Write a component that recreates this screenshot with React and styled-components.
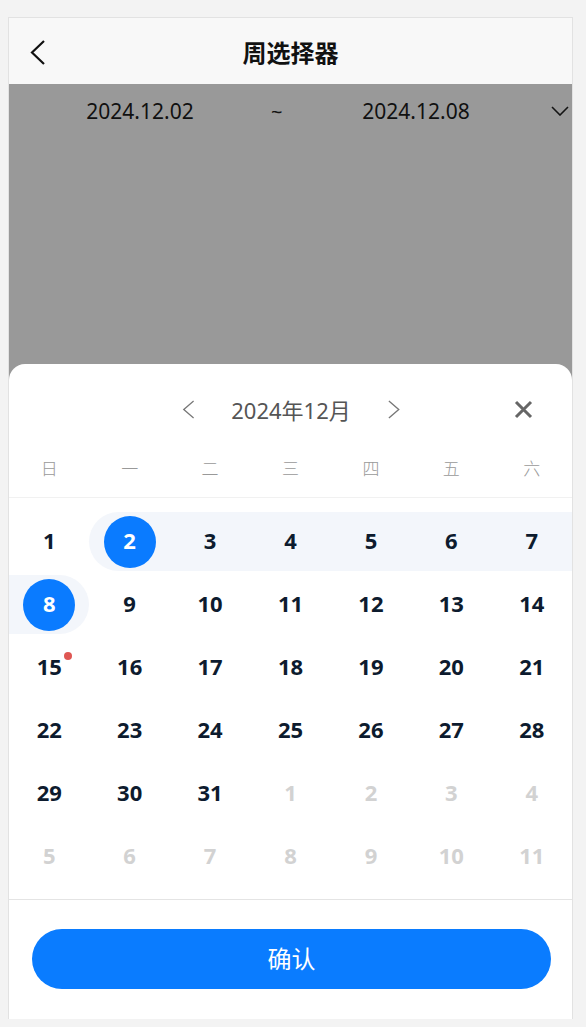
import React from "react";
import styled, { createGlobalStyle } from "styled-components";

const GlobalStyle = createGlobalStyle`
  html, body {
    margin: 0;
    background: #f3f3f3;
  }
  body {
    padding: 17px 0 0 8px;
    font-family: "Noto Sans", "Noto Sans CJK SC", sans-serif;
  }
`;

const weekNames = ["日", "一", "二", "三", "四", "五", "六"];

// December 2024, starting from Sunday 1st
const buildDays = () => {
  const days = [];
  for (let d = 1; d <= 31; d++) days.push({ day: d, muted: false });
  for (let d = 1; d <= 11; d++) days.push({ day: d, muted: true });
  return days;
};

const selectedStart = 2;
const selectedEnd = 8;

// which corners of the week band get rounded for this cell
function bandFor(item) {
  if (item.muted) return null;
  if (item.day < selectedStart || item.day > selectedEnd) return null;
  const left = item.day === selectedStart;
  const right = item.day === selectedEnd;
  if (left && right) return "single";
  if (left) return "start";
  if (right) return "end";
  return "flat";
}

function ChevronLeft({ size = 24, stroke = "#111", width = 2 }) {
  return (
    <svg width={size * 0.66} height={size} viewBox="0 0 14 21" fill="none">
      <path d="M13 1 L2 10.5 L13 20" stroke={stroke} strokeWidth={width} />
    </svg>
  );
}

function ChevronRight({ size = 24, stroke = "#111", width = 2 }) {
  return (
    <svg width={size * 0.66} height={size} viewBox="0 0 14 21" fill="none">
      <path d="M1 1 L12 10.5 L1 20" stroke={stroke} strokeWidth={width} />
    </svg>
  );
}

function App() {
  const days = buildDays();

  return (
    <>
      <GlobalStyle />
      <Frame>
        <NavBar>
          <BackButton>
            <svg width="16" height="25" viewBox="0 0 16 25" fill="none">
              <path d="M14 1 L2 12.5 L14 24" stroke="#111" strokeWidth="2.2" />
            </svg>
          </BackButton>
          <Title>周选择器</Title>
        </NavBar>
        <Content>
          <DateBar>
            <DateText>2024.12.02</DateText>
            <Tilde>~</Tilde>
            <DateText>2024.12.08</DateText>
            <DropArrow>
              <svg width="18" height="10" viewBox="0 0 18 10" fill="none">
                <path d="M1 1 L9 9 L17 1" stroke="#222" strokeWidth="1.6" />
              </svg>
            </DropArrow>
          </DateBar>
          <Mask />
          <Sheet>
            <MonthBar>
              <MonthNav>
                <NavArrow>
                  <ChevronLeft size={19} stroke="#777" width={1.5} />
                </NavArrow>
                <MonthTitle>2024年12月</MonthTitle>
                <NavArrow>
                  <ChevronRight size={19} stroke="#777" width={1.5} />
                </NavArrow>
              </MonthNav>
              <CloseButton>
                <svg width="19" height="19" viewBox="0 0 19 19" fill="none">
                  <path d="M2 2 L17 17 M17 2 L2 17" stroke="#666" strokeWidth="3" />
                </svg>
              </CloseButton>
            </MonthBar>
            <WeekHeader>
              {weekNames.map((w) => (
                <WeekName key={w}>{w}</WeekName>
              ))}
            </WeekHeader>
            <DayGrid>
              {days.map((item, i) => {
                const band = bandFor(item);
                const picked =
                  !item.muted &&
                  (item.day === selectedStart || item.day === selectedEnd);
                return (
                  <DayCell key={i}>
                    <Band $shape={band}>
                      {picked ? (
                        <Picked>{item.day}</Picked>
                      ) : (
                        <DayNum $muted={item.muted}>
                          {item.day}
                          {!item.muted && item.day === 15 && <Dot />}
                        </DayNum>
                      )}
                    </Band>
                  </DayCell>
                );
              })}
            </DayGrid>
            <Footer>
              <ConfirmButton>确认</ConfirmButton>
            </Footer>
          </Sheet>
        </Content>
      </Frame>
    </>
  );
}

const Frame = styled.div`
  width: 563px;
  height: 1001px;
  border: 1px solid #e2e2e2;
  border-bottom: none;
  background: #ffffff;
  display: flex;
  flex-direction: column;
  overflow: hidden;
`;

const NavBar = styled.div`
  height: 66px;
  flex-shrink: 0;
  background: #f8f8f8;
  display: flex;
  align-items: center;
  justify-content: center;
  position: relative;
`;

const BackButton = styled.div`
  position: absolute;
  left: 21px;
  top: 22px;
  display: flex;
`;

const Title = styled.h1`
  margin: 0;
  font-size: 24px;
  font-weight: 700;
  color: #111;
  font-family: "Noto Sans CJK SC", sans-serif;
`;

const Content = styled.div`
  flex: 1;
  position: relative;
`;

const DateBar = styled.div`
  height: 54px;
  display: grid;
  grid-template-columns: 262px 10px 270px 1fr;
  align-items: center;
`;

const DateText = styled.div`
  text-align: center;
  font-size: 21px;
  color: #1c1c1c;
`;

const Tilde = styled.div`
  text-align: center;
  font-size: 20px;
  color: #222;
`;

const DropArrow = styled.div`
  display: flex;
  justify-content: flex-start;
`;

const Mask = styled.div`
  position: absolute;
  inset: 0;
  background: rgba(0, 0, 0, 0.4);
`;

const Sheet = styled.div`
  position: absolute;
  left: 0;
  right: 0;
  bottom: 0;
  background: #fff;
  border-radius: 16px 16px 0 0;
  display: flex;
  flex-direction: column;
`;

const MonthBar = styled.div`
  height: 90px;
  display: flex;
  align-items: center;
  justify-content: center;
  position: relative;
`;

const MonthNav = styled.div`
  display: flex;
  align-items: center;
  gap: 37px;
  margin-left: 1px;
`;

const NavArrow = styled.div`
  display: flex;
  padding-top: 1px;
`;

const MonthTitle = styled.div`
  font-size: 22px;
  color: #555;
  font-family: "Noto Sans", "Noto Sans CJK SC", sans-serif;
`;

const CloseButton = styled.div`
  position: absolute;
  right: 39px;
  top: 36px;
  display: flex;
`;

const WeekHeader = styled.div`
  display: grid;
  grid-template-columns: repeat(7, 1fr);
  height: 28px;
  padding-bottom: 15px;
  border-bottom: 1px solid #f1f1f1;
`;

const WeekName = styled.div`
  text-align: center;
  line-height: 28px;
  font-size: 17px;
  color: #999;
  font-family: "Noto Sans CJK SC", sans-serif;
  font-weight: 300;
`;

const DayGrid = styled.div`
  display: grid;
  grid-template-columns: repeat(7, 1fr);
  grid-auto-rows: 63px;
  padding: 12px 0 11px;
  border-bottom: 1px solid #e4e4e4;
`;

const DayCell = styled.div`
  padding: 2px 0;
  display: flex;
`;

const bandRadius = {
  start: "30px 0 0 30px",
  end: "0 30px 30px 0",
  single: "30px",
  flat: "0",
};

const Band = styled.div`
  flex: 1;
  display: flex;
  align-items: center;
  justify-content: center;
  background: ${(p) => (p.$shape ? "#f3f6fb" : "transparent")};
  border-radius: ${(p) => (p.$shape ? bandRadius[p.$shape] : "0")};
`;

const DayNum = styled.span`
  position: relative;
  font-size: 22px;
  line-height: 1;
  font-weight: 700;
  margin-bottom: 3px;
  color: ${(p) => (p.$muted ? "#d2d2d2" : "#0d1b2e")};
`;

const Dot = styled.span`
  position: absolute;
  top: -3px;
  right: -10px;
  width: 8px;
  height: 8px;
  border-radius: 50%;
  background: #df5753;
`;

const Picked = styled.span`
  width: 52px;
  height: 52px;
  box-sizing: border-box;
  padding-bottom: 4px;
  border-radius: 50%;
  background: #0a7bff;
  color: #fff;
  font-size: 22px;
  line-height: 1;
  font-weight: 700;
  display: flex;
  align-items: center;
  justify-content: center;
`;

const Footer = styled.div`
  padding: 29px 21px 30px 23px;
`;

const ConfirmButton = styled.button`
  width: 100%;
  height: 60px;
  border: none;
  border-radius: 30px;
  background: #0a7cff;
  color: #fff;
  font-size: 24px;
  font-family: "Noto Sans CJK SC", sans-serif;
  padding: 0 0 3px;
`;

export default App;
